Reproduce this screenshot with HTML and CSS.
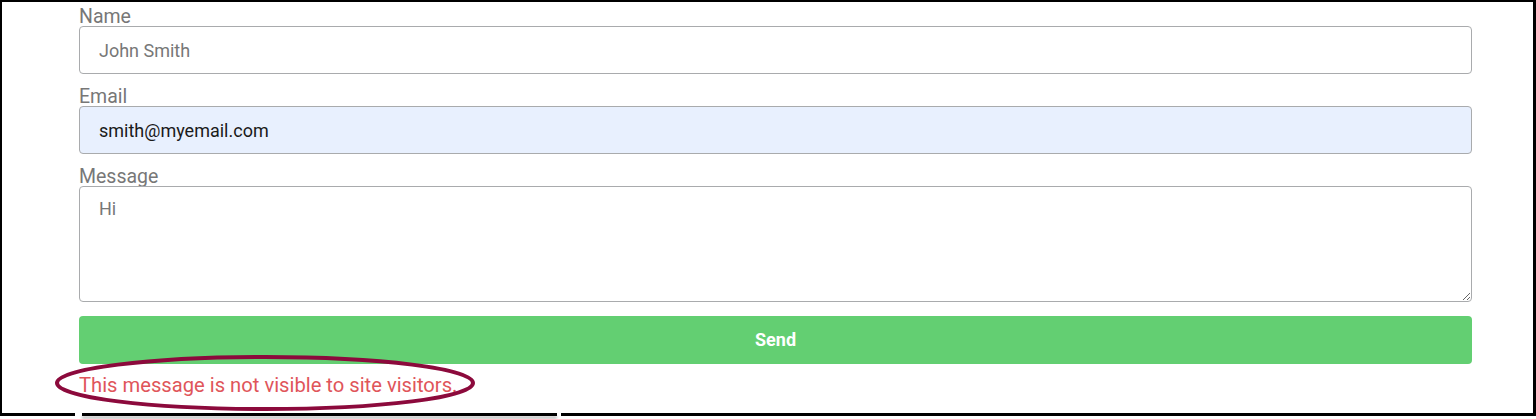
FILE: index.html
```html
<!DOCTYPE html>
<html lang="en">
<head>
<meta charset="utf-8">
<title>Contact form</title>
<link rel="stylesheet" href="styles.css">
</head>
<body>
<div class="frame">
  <form class="form">
    <div class="field">
      <label class="label" for="name">Name</label>
      <input class="input" id="name" type="text" value="John Smith">
    </div>
    <div class="field">
      <label class="label" for="email">Email</label>
      <input class="input input-autofill" id="email" type="text" value="smith@myemail.com">
    </div>
    <div class="field">
      <label class="label" for="msg">Message</label>
      <textarea class="textarea" id="msg">Hi</textarea>
    </div>
    <button class="send" type="button">Send</button>
    <p class="notice">This message is not visible to site visitors.</p>
  </form>
  <svg class="annotation" width="440" height="70" viewBox="0 0 440 70">
    <ellipse cx="210" cy="28" rx="208" ry="26" fill="none" stroke="#8c0a3c" stroke-width="4"/>
  </svg>
</div>
<div class="bottom-edge">
  <div class="edge edge-left"></div>
  <div class="edge edge-mid"></div>
  <div class="edge edge-right"></div>
</div>
</body>
</html>
```
FILE: styles.css
```css
html, body {
  margin: 0;
  padding: 0;
  background: #fff;
}
body {
  font-family: Roboto, "Liberation Sans", Arial, sans-serif;
  width: 1536px;
  height: 419px;
  overflow: hidden;
}
.frame {
  position: relative;
  box-sizing: border-box;
  height: 413px;
  border-top: 2px solid #000;
  border-left: 2px solid #000;
  border-right: 3px solid #000;
  padding: 4px 0 0 77px;
}
.form {
  width: 1393px;
  display: flex;
  flex-direction: column;
  margin: 0;
}
.field {
  display: flex;
  flex-direction: column;
  margin-bottom: 12px;
}
.field:nth-child(3) {
  margin-bottom: 14px;
}
.label {
  font-size: 19.5px;
  line-height: 19px;
  padding-top: 1px;
  color: #777;
}
.input {
  box-sizing: border-box;
  height: 48px;
  width: 100%;
  border: 1px solid #a9abad;
  border-radius: 4px;
  padding: 0 19px;
  font-family: Roboto, "Liberation Sans", Arial, sans-serif;
  font-size: 18px;
  color: #777;
  background: #fff;
  outline: none;
  margin: 0;
}
.input-autofill {
  background: #e8f0fe;
  color: #1a1a1a;
  font-size: 18px;
}
.textarea {
  box-sizing: border-box;
  height: 116px;
  width: 100%;
  border: 1px solid #a9abad;
  border-radius: 4px;
  padding: 10px 19px;
  font-family: Roboto, "Liberation Sans", Arial, sans-serif;
  font-size: 18px;
  line-height: 24px;
  color: #777;
  background: #fff;
  margin: 0;
  resize: both;
}
.send {
  height: 48px;
  width: 100%;
  border: none;
  border-radius: 4px;
  background: #63cf72;
  color: #fff;
  font-family: Roboto, "Liberation Sans", Arial, sans-serif;
  font-weight: 700;
  font-size: 18px;
  line-height: 46px;
  margin: 0;
}
.notice {
  margin: 9px 0 0 0;
  font-size: 20.2px;
  line-height: 24px;
  color: #e0555a;
}
.annotation {
  position: absolute;
  left: 53px;
  top: 353px;
  overflow: visible;
}
.bottom-edge {
  display: flex;
  height: 3px;
}
.edge {
  height: 3px;
  background: #000;
}
.edge-left {
  width: 75px;
}
.edge-mid {
  width: 475px;
  margin-left: 7px;
  box-shadow: 0 3px 3px rgba(0,0,0,0.25);
}
.edge-right {
  flex: 1;
  margin-left: 4px;
}
```
